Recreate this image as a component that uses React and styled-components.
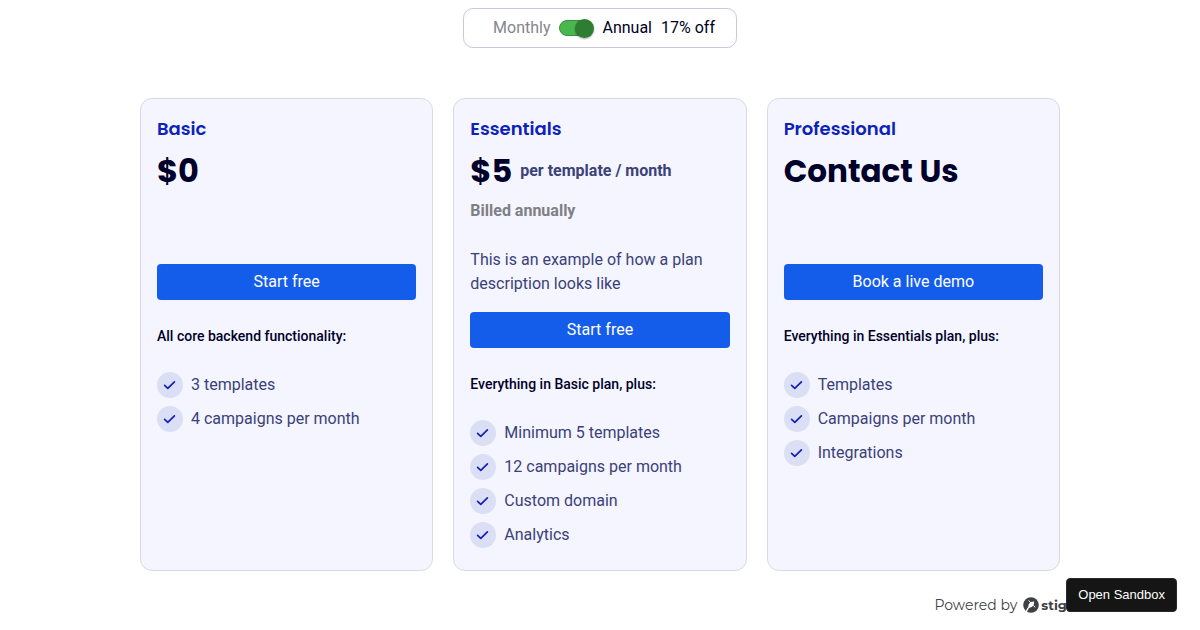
import { useState } from 'react';
import styled, { createGlobalStyle } from 'styled-components';

const plans = [
  {
    name: 'Basic',
    price: '$0',
    cta: 'Start free',
    inherits: 'All core backend functionality:',
    features: ['3 templates', '4 campaigns per month'],
  },
  {
    name: 'Essentials',
    price: '$5',
    unit: 'per template / month',
    billing: 'Billed annually',
    description: 'This is an example of how a plan description looks like',
    cta: 'Start free',
    inherits: 'Everything in Basic plan, plus:',
    features: ['Minimum 5 templates', '12 campaigns per month', 'Custom domain', 'Analytics'],
  },
  {
    name: 'Professional',
    price: 'Contact Us',
    custom: true,
    cta: 'Book a live demo',
    inherits: 'Everything in Essentials plan, plus:',
    features: ['Templates', 'Campaigns per month', 'Integrations'],
  },
];

const CheckIcon = () => (
  <svg width="14" height="14" viewBox="0 0 14 14" fill="none" aria-hidden="true">
    <path
      d="M1.6 7.4 4.8 10.4 11.4 3.9"
      stroke="#1220b8"
      strokeWidth="1.7"
      strokeLinecap="round"
      strokeLinejoin="round"
    />
  </svg>
);

const StiggIcon = () => (
  <svg width="16" height="16" viewBox="0 0 16 16" aria-hidden="true">
    <circle cx="8" cy="8" r="7.8" fill="#3f3f46" />
    <path d="M7.4 5 11.2 4.6 10.6 8.4 8.6 10 5.2 11.2 5.6 7.4Z" fill="#fff" />
    <path d="M7.4 5.4 5.6 3.4M10.4 8.4 12.2 10.4" stroke="#fff" strokeWidth="0.9" />
    <path d="M5.8 10 3.2 14.6" stroke="#fff" strokeWidth="1.4" />
  </svg>
);

const PlanCard = ({ plan }) => (
  <Card>
    <PlanName>{plan.name}</PlanName>
    <PriceRow>
      <Price $custom={plan.custom}>{plan.price}</Price>
      {plan.unit && <Unit>{plan.unit}</Unit>}
    </PriceRow>
    <Billing>{plan.billing}</Billing>
    <Description>{plan.description}</Description>
    <CtaButton type="button">{plan.cta}</CtaButton>
    <Inherits>{plan.inherits}</Inherits>
    <Features>
      {plan.features.map((feature) => (
        <Feature key={feature}>
          <CheckBadge>
            <CheckIcon />
          </CheckBadge>
          {feature}
        </Feature>
      ))}
    </Features>
  </Card>
);

const App = () => {
  const [annual, setAnnual] = useState(true);

  return (
    <>
      <GlobalStyle />
      <Page>
        <PeriodPicker>
          <PeriodLabel htmlFor="billing-period" $muted={annual}>
            Monthly
          </PeriodLabel>
          <Switch
            id="billing-period"
            type="checkbox"
            role="switch"
            aria-label="Annual billing"
            checked={annual}
            onChange={(e) => setAnnual(e.target.checked)}
          />
          <PeriodLabel htmlFor="billing-period" $muted={!annual}>
            Annual
          </PeriodLabel>
          <Discount>17% off</Discount>
        </PeriodPicker>
        <Plans>
          {plans.map((plan) => (
            <PlanCard key={plan.name} plan={plan} />
          ))}
        </Plans>
        <PoweredBy href="#stigg">
          Powered by
          <Brand>
            <StiggIcon />
            stigg
          </Brand>
        </PoweredBy>
      </Page>
      <SandboxButton type="button">Open Sandbox</SandboxButton>
    </>
  );
};

const GlobalStyle = createGlobalStyle`
  * {
    box-sizing: border-box;
  }
  body {
    margin: 0;
    background: #fff;
    font-family: Roboto, sans-serif;
    font-size: 16px;
    line-height: 24px;
  }
`;

const Page = styled.main`
  display: flex;
  flex-direction: column;
  align-items: center;
  max-width: 960px;
  margin: 0 auto;
  padding-top: 8px;
`;

const PeriodPicker = styled.div`
  display: flex;
  align-items: center;
  height: 40px;
  padding: 0 21px 0 29px;
  border: 1px solid #c8c9e0;
  border-radius: 10px;
  color: #00001e;
`;

const PeriodLabel = styled.label`
  color: ${({ $muted }) => ($muted ? '#86868b' : '#00001e')};
  cursor: pointer;
`;

const Discount = styled.span`
  margin-left: 9px;
`;

const Switch = styled.input`
  appearance: none;
  display: flex;
  align-items: center;
  width: 34px;
  height: 16px;
  margin: 0 9px;
  border: 1px solid #3a8f3e;
  border-radius: 8px;
  background: #48b84c;
  cursor: pointer;

  &::before {
    content: '';
    flex: none;
    width: 19px;
    height: 19px;
    margin-left: -2px;
    border-radius: 50%;
    background: #2e7d32;
    box-shadow: 0 1px 2px rgba(0, 0, 0, 0.35);
  }
  &:checked::before {
    margin-left: 15px;
  }
`;

const Plans = styled.section`
  display: grid;
  grid-template-columns: repeat(3, 1fr);
  gap: 20px;
  width: 100%;
  padding: 50px 20px 0;
`;

const Card = styled.article`
  display: flex;
  flex-direction: column;
  padding: 18px 16px 22px;
  border: 1px solid #d9d9e3;
  border-radius: 12px;
  background: #f4f5fe;
`;

const PlanName = styled.h2`
  margin: 0;
  color: #0c22b8;
  font-family: Poppins, Inter, sans-serif;
  font-size: 18px;
  font-weight: 600;
`;

const PriceRow = styled.div`
  display: flex;
  align-items: center;
  gap: 8px;
  height: 44px;
  margin: 8px 0 6px;
`;

const Price = styled.span`
  color: #00002a;
  font-family: Poppins, Inter, sans-serif;
  font-size: ${({ $custom }) => ($custom ? '31px' : '32px')};
  font-weight: 700;
`;

const Unit = styled.span`
  color: #3b4179;
  font-weight: 700;
`;

const Billing = styled.div`
  min-height: 24px;
  color: #7f7f86;
  font-weight: 700;
`;

const Description = styled.p`
  margin: 25px 0 16px;
  color: #3b4179;
`;

const CtaButton = styled.button`
  height: 36px;
  padding: 0 16px;
  border: 0;
  border-radius: 4px;
  background: #145dea;
  color: #fff;
  font: inherit;
  cursor: pointer;
`;

const Inherits = styled.h3`
  margin: 24px 0;
  color: #00002a;
  font-size: 14px;
  font-weight: 500;
`;

const Features = styled.ul`
  display: flex;
  flex-direction: column;
  gap: 8px;
  margin: 0;
  padding: 0;
  list-style: none;
`;

const Feature = styled.li`
  display: flex;
  align-items: center;
  gap: 8px;
  color: #3b4179;
`;

const CheckBadge = styled.span`
  display: flex;
  align-items: center;
  justify-content: center;
  flex: none;
  width: 26px;
  height: 26px;
  border-radius: 50%;
  background: #dadff5;
`;

const PoweredBy = styled.a`
  display: flex;
  align-items: center;
  align-self: flex-end;
  gap: 6px;
  padding: 22px 4px 0 0;
  color: #3f3f46;
  font-family: Montserrat, Inter, sans-serif;
  font-size: 14px;
  text-decoration: none;
`;

const Brand = styled.span`
  display: flex;
  align-items: center;
  gap: 2px;
  font-size: 13px;
  font-weight: 700;
`;

const SandboxButton = styled.button`
  position: fixed;
  right: 23px;
  bottom: 18px;
  height: 34px;
  padding: 0 11px 2px;
  border: 1px solid #2a2a2a;
  border-radius: 4px;
  background: #151515;
  color: #fff;
  font-family: 'Liberation Sans', Arial, sans-serif;
  font-size: 13px;
  cursor: pointer;
`;

export default App;
